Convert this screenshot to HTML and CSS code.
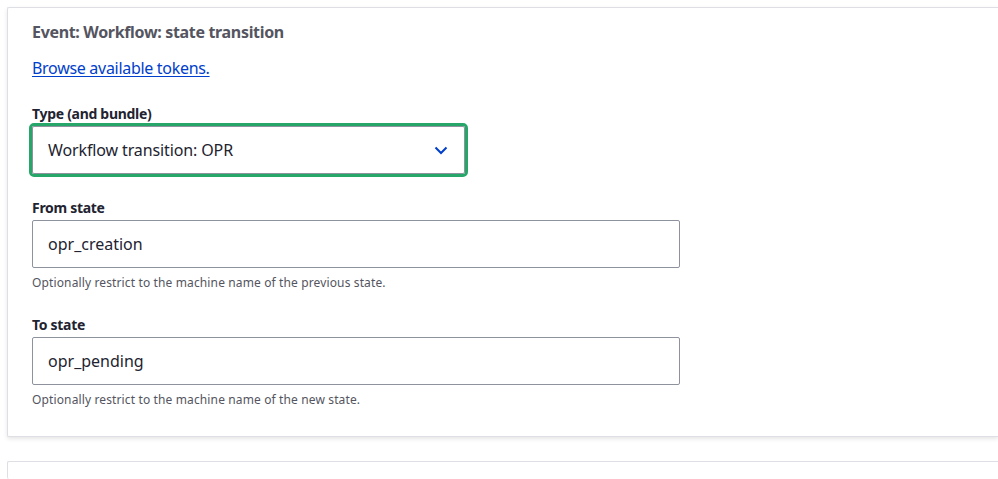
FILE: index.html
```html
<!DOCTYPE html>
<html lang="en">
<head>
<meta charset="utf-8">
<title>Workflow state transition</title>
<link rel="stylesheet" href="styles.css">
</head>
<body>
<div class="page">
  <section class="card">
    <h2 class="card-title">Event: Workflow: state transition</h2>
    <p class="tokens"><a href="#">Browse available tokens.</a></p>
    <div class="field field-select">
      <label class="label">Type (and bundle)</label>
      <div class="focus-ring">
        <div class="select">
          <span>Workflow transition: OPR</span>
          <svg class="chev" width="14" height="9" viewBox="0 0 14 9"><path d="M1.5 1.5 L7 7 L12.5 1.5" fill="none" stroke="#003ecc" stroke-width="2"/></svg>
        </div>
      </div>
    </div>
    <div class="field field-from">
      <label class="label">From state</label>
      <div class="input">opr_creation</div>
      <div class="desc">Optionally restrict to the machine name of the previous state.</div>
    </div>
    <div class="field field-to">
      <label class="label">To state</label>
      <div class="input">opr_pending</div>
      <div class="desc">Optionally restrict to the machine name of the new state.</div>
    </div>
  </section>
  <section class="card card-next"></section>
</div>
</body>
</html>
```

FILE: styles.css
```css
* { box-sizing: border-box; }
html, body { margin: 0; padding: 0; background: #fff; }
body {
  font-family: "Noto Sans", "Open Sans", sans-serif;
  color: #222330;
  overflow: hidden;
  height: 479px;
}
.page {
  padding: 7px 0 0 7px;
  display: flex;
  flex-direction: column;
  gap: 24px;
}
.card {
  background: #fff;
  border: 1px solid #dedfe4;
  border-right: none;
  border-radius: 2px 0 0 2px;
  box-shadow: 0 2px 4px rgba(0, 0, 0, 0.1);
  padding: 14px 24px 28px 24px;
}
.card-next {
  height: 18px;
  padding: 0;
  border-bottom: none;
  box-shadow: none;
}
.card-title {
  margin: 0;
  font-size: 16px;
  font-weight: 700;
  line-height: 20px;
  letter-spacing: -0.33px;
  color: #545560;
}
.tokens {
  margin: 16px 0 0;
  font-size: 16px;
  line-height: 20px;
  letter-spacing: -0.3px;
}
.tokens a { color: #003ecc; text-decoration: underline; text-underline-offset: 2px; }
.field-select { margin-top: 27px; }
.field-from { margin-top: 22px; }
.field-to { margin-top: 25px; }
.label {
  display: block;
  font-size: 14px;
  font-weight: 700;
  line-height: 18px;
  letter-spacing: -0.3px;
  margin-bottom: 3px;
  color: #222330;
}
.field-select .label { margin-bottom: 0; }
.focus-ring {
  width: 439px;
  margin-left: -3px;
  border: 3px solid #26a769;
  border-radius: 5px;
}
.select {
  height: 48px;
  border: 1px solid #8e929c;
  border-radius: 2px;
  display: flex;
  align-items: center;
  justify-content: space-between;
  padding: 0 16px 0 15px;
  font-size: 16px;
  letter-spacing: -0.12px;
}
.input {
  width: 648px;
  height: 48px;
  border: 1px solid #8e929c;
  border-radius: 2px;
  display: flex;
  align-items: center;
  padding: 0 15px;
  font-size: 16px;
}
.desc {
  margin-top: 7px;
  font-size: 12px;
  line-height: 16px;
  letter-spacing: 0.13px;
  color: #545560;
}
```
